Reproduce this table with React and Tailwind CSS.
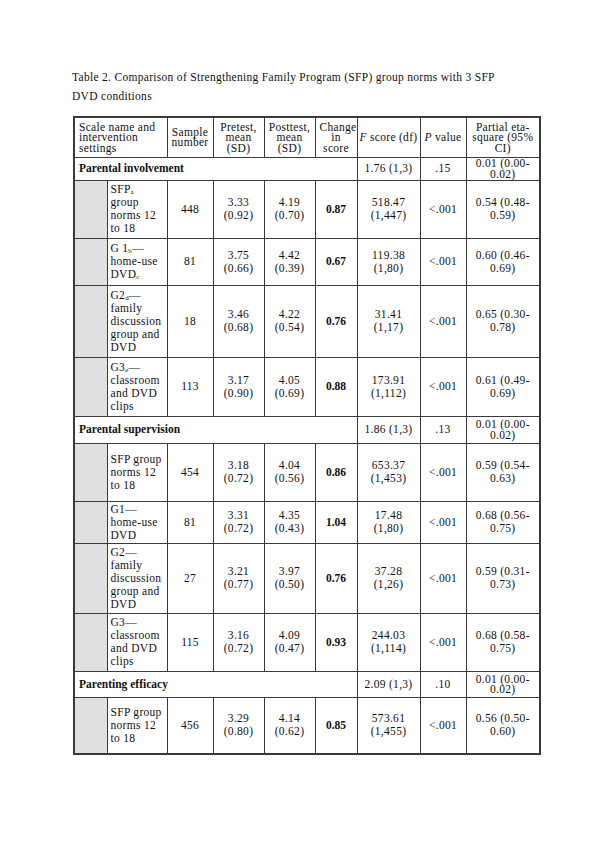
const Sub = ({ children }) => (
  <span className="text-[7px] leading-none align-[-1px]">{children}</span>
);

const sections = [
  {
    title: 'Parental involvement',
    f: '1.76 (1,3)',
    p: '.15',
    eta: ['0.01 (0.00-', '0.02)'],
    h: 'h-[23px]',
    rows: [
      { label: [<>SFP<Sub>a</Sub></>, 'group', 'norms 12', 'to 18'], n: '448', pre: ['3.33', '(0.92)'], post: ['4.19', '(0.70)'], ch: '0.87', f: ['518.47', '(1,447)'], eta: ['0.54 (0.48-', '0.59)'], h: 'h-[58px]' },
      { label: [<>G 1<Sub>b</Sub>—</>, 'home-use', <>DVD<Sub>c</Sub></>], n: '81', pre: ['3.75', '(0.66)'], post: ['4.42', '(0.39)'], ch: '0.67', f: ['119.38', '(1,80)'], eta: ['0.60 (0.46-', '0.69)'], h: 'h-[47px]' },
      { label: [<>G2<Sub>d</Sub>—</>, 'family', 'discussion', 'group and', 'DVD'], n: '18', pre: ['3.46', '(0.68)'], post: ['4.22', '(0.54)'], ch: '0.76', f: ['31.41', '(1,17)'], eta: ['0.65 (0.30-', '0.78)'], h: 'h-[72px]' },
      { label: [<>G3<Sub>e</Sub>—</>, 'classroom', 'and DVD', 'clips'], n: '113', pre: ['3.17', '(0.90)'], post: ['4.05', '(0.69)'], ch: '0.88', f: ['173.91', '(1,112)'], eta: ['0.61 (0.49-', '0.69)'], h: 'h-[59px]' },
    ],
  },
  {
    title: 'Parental supervision',
    f: '1.86 (1,3)',
    p: '.13',
    eta: ['0.01 (0.00-', '0.02)'],
    h: 'h-[27px]',
    rows: [
      { label: ['SFP group', 'norms 12', 'to 18'], n: '454', pre: ['3.18', '(0.72)'], post: ['4.04', '(0.56)'], ch: '0.86', f: ['653.37', '(1,453)'], eta: ['0.59 (0.54-', '0.63)'], h: 'h-[58px]' },
      { label: ['G1—', 'home-use', 'DVD'], n: '81', pre: ['3.31', '(0.72)'], post: ['4.35', '(0.43)'], ch: '1.04', f: ['17.48', '(1,80)'], eta: ['0.68 (0.56-', '0.75)'], h: 'h-[42px]' },
      { label: ['G2—', 'family', 'discussion', 'group and', 'DVD'], n: '27', pre: ['3.21', '(0.77)'], post: ['3.97', '(0.50)'], ch: '0.76', f: ['37.28', '(1,26)'], eta: ['0.59 (0.31-', '0.73)'], h: 'h-[70px]' },
      { label: ['G3—', 'classroom', 'and DVD', 'clips'], n: '115', pre: ['3.16', '(0.72)'], post: ['4.09', '(0.47)'], ch: '0.93', f: ['244.03', '(1,114)'], eta: ['0.68 (0.58-', '0.75)'], h: 'h-[58px]' },
    ],
  },
  {
    title: 'Parenting efficacy',
    f: '2.09 (1,3)',
    p: '.10',
    eta: ['0.01 (0.00-', '0.02)'],
    h: 'h-[26px]',
    rows: [
      { label: ['SFP group', 'norms 12', 'to 18'], n: '456', pre: ['3.29', '(0.80)'], post: ['4.14', '(0.62)'], ch: '0.85', f: ['573.61', '(1,455)'], eta: ['0.56 (0.50-', '0.60)'], h: 'h-[57px]' },
    ],
  },
];

const cell = 'border-[1.5px] border-[#3a3a3a] px-[4px] py-0 align-middle';

function Lines({ lines }) {
  return lines.map((l, i) => <div key={i}>{l}</div>);
}

export default function App() {
  return (
    <div className="w-[595px] h-[842px] bg-white text-[#111] font-['Liberation_Serif','DejaVu_Serif',serif] text-[11.5px] leading-[13px] tracking-[0.3px]">
      <p className="pl-[72px] pt-[68px] leading-[19px]">
        Table 2. Comparison of Strengthening Family Program (SFP) group norms with 3 SFP
        <br />
        DVD conditions
      </p>

      <table className="ml-[73px] mt-[10px] w-[466px] border-collapse table-fixed border-[2px] border-[#3a3a3a]">
        <colgroup>
          <col className="w-[33px]" />
          <col className="w-[60px]" />
          <col className="w-[46px]" />
          <col className="w-[51px]" />
          <col className="w-[51px]" />
          <col className="w-[42px]" />
          <col className="w-[63px]" />
          <col className="w-[46px]" />
          <col className="w-[74px]" />
        </colgroup>
        <thead className="leading-[10.5px]">
          <tr className="h-[40px]">
            <td colSpan={2} className={`${cell} text-left`}>
              <Lines lines={['Scale name and', 'intervention', 'settings']} />
            </td>
            <td className={`${cell} text-center`}>
              <Lines lines={['Sample', 'number']} />
            </td>
            <td className={`${cell} text-center`}>
              <Lines lines={['Pretest,', 'mean', '(SD)']} />
            </td>
            <td className={`${cell} text-center`}>
              <Lines lines={['Posttest,', 'mean', '(SD)']} />
            </td>
            <td className={`${cell} text-center`}>
              <Lines lines={['Change', 'in', 'score']} />
            </td>
            <td className={`${cell} !px-[2px] text-center whitespace-nowrap`}>
              <i>F</i> score (df)
            </td>
            <td className={`${cell} text-center whitespace-nowrap`}>
              <i>P</i> value
            </td>
            <td className={`${cell} text-center`}>
              <Lines lines={['Partial eta-', 'square (95%', 'CI)']} />
            </td>
          </tr>
        </thead>
        <tbody>
          {sections.map((s) => (
            <SectionRows key={s.title} section={s} />
          ))}
        </tbody>
      </table>
    </div>
  );
}

function SectionRows({ section }) {
  return (
    <>
      <tr className={section.h}>
        <td colSpan={6} className={`${cell} text-left font-bold tracking-normal`}>
          {section.title}
        </td>
        <td className={`${cell} text-center`}>{section.f}</td>
        <td className={`${cell} text-center`}>{section.p}</td>
        <td className={`${cell} text-center leading-[10.5px]`}>
          <Lines lines={section.eta} />
        </td>
      </tr>
      {section.rows.map((r, i) => (
        <tr key={i} className={r.h}>
          <td className={`${cell} bg-[#e0e0e0]`}></td>
          <td className={`${cell} !pl-[3px] !pr-0 text-left whitespace-nowrap`}>
            <Lines lines={r.label} />
          </td>
          <td className={`${cell} text-center`}>{r.n}</td>
          <td className={`${cell} text-center`}>
            <Lines lines={r.pre} />
          </td>
          <td className={`${cell} text-center`}>
            <Lines lines={r.post} />
          </td>
          <td className={`${cell} text-center font-bold tracking-normal`}>{r.ch}</td>
          <td className={`${cell} text-center`}>
            <Lines lines={r.f} />
          </td>
          <td className={`${cell} text-center`}>&lt;.001</td>
          <td className={`${cell} text-center`}>
            <Lines lines={r.eta} />
          </td>
        </tr>
      ))}
    </>
  );
}
